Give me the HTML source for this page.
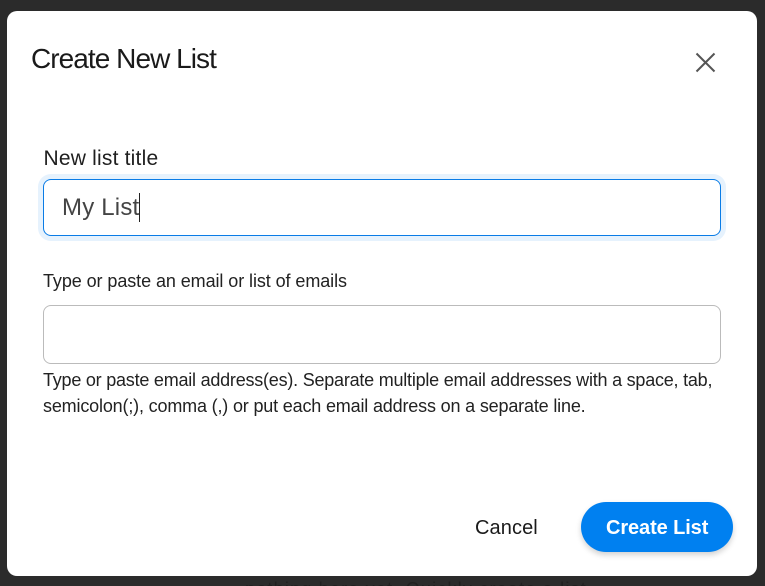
<!DOCTYPE html>
<html><head><meta charset="utf-8"><style>
html,body{margin:0;padding:0;width:765px;height:586px;overflow:hidden;background:#2b2b2b}
body{position:relative;font-family:"Liberation Sans",sans-serif}
.t{position:absolute;white-space:nowrap;line-height:1}
.modal{position:absolute;left:7px;top:11px;width:750px;height:565px;background:#fff;border-radius:10px}
.inp{position:absolute;box-sizing:border-box;left:43px;width:678px;background:#fff;border-radius:8px}
</style></head><body>
<div class="t" style="left:245px;top:580px;font-size:18px;color:#202020;letter-spacing:1.2px">nothing here yet. Quickly create a list</div>
<div class="modal"></div>
<div class="t" style="left:31px;top:45px;font-size:28px;color:#1a1a1a;letter-spacing:-.95px">Create New List</div>
<svg style="position:absolute;left:690px;top:46px" width="32" height="32" viewBox="0 0 32 32"><path d="M6.5 7.500L24.500 25.500M24.500 7.500L6.500 25.500" stroke="#555" stroke-width="2" fill="none"/></svg>
<div class="t" style="left:43.500px;top:148px;font-size:21px;color:#1f1f1f;letter-spacing:.2px">New list title</div>
<div class="inp" style="top:179px;height:57px;border:1px solid #0a7ce6;box-shadow:0 0 0 5px #e6f2fd"></div>
<div class="t" style="left:62px;top:196px;font-size:24px;color:#444;letter-spacing:.2px">My List</div>
<div style="position:absolute;left:139px;top:193px;width:1px;height:29px;background:#222"></div>
<div class="t" style="left:43px;top:272px;font-size:18px;color:#222;letter-spacing:-.08px">Type or paste an email or list of emails</div>
<div class="inp" style="top:305px;height:59px;border:1px solid #bbb"></div>
<div class="t" style="left:43px;top:371px;font-size:18px;color:#222;letter-spacing:-.225px">Type or paste email address(es). Separate multiple email addresses with a space, tab,</div>
<div class="t" style="left:43px;top:397px;font-size:18px;color:#222;letter-spacing:-.17px">semicolon(;), comma (,) or put each email address on a separate line.</div>
<div class="t" style="left:475px;top:518px;font-size:20px;color:#1a1a1a;letter-spacing:.1px">Cancel</div>
<div style="position:absolute;left:581px;top:502px;width:152px;height:50px;border-radius:25px;background:#0080f0;box-shadow:0 3px 6px rgba(0,0,0,.18)"></div>
<div class="t" style="left:606px;top:518px;font-size:20px;font-weight:bold;color:#fff;letter-spacing:-.1px">Create List</div>
</body></html>
